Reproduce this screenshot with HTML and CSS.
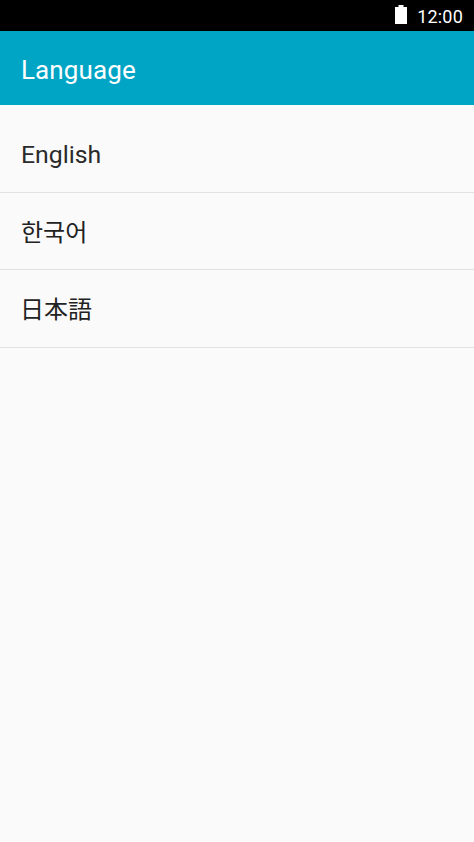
FILE: index.html
```html
<!DOCTYPE html>
<html lang="en">
<head>
<meta charset="utf-8">
<title>Language</title>
<link rel="stylesheet" href="styles.css">
</head>
<body>
<div class="status">
  <svg class="battery" width="14" height="19" viewBox="0 0 14 19"><path d="M4.500 0h5v2H13v17H1V2h3.500z" fill="#fff"/></svg>
  <span class="clock">12:00</span>
</div>
<header class="bar"><h1 class="title">Language</h1></header>
<main class="list">
  <div class="item en">English</div>
  <div class="item cjk-ko" lang="ko">한국어</div>
  <div class="item cjk-ja" lang="ja">日本語</div>
</main>
</body>
</html>
```
FILE: styles.css
```css
html, body { margin: 0; height: 100%; }
body {
  width: 474px; height: 842px; overflow: hidden;
  display: flex; flex-direction: column;
  background: #fafafa;
  font-family: Roboto, "Noto Sans CJK KR", sans-serif;
}
.status {
  height: 31px; background: #000; color: #fff;
  display: flex; align-items: center; justify-content: flex-end;
  gap: 9px; padding-right: 11px;
}
.battery { margin-bottom: 2px; }
.clock { font-size: 18px; line-height: 31px; letter-spacing: .2px; padding-top: 2px; }
.bar {
  height: 74px; background: #00a5c6;
  display: flex; align-items: center; padding-left: 21px;
}
.title { margin: 0; padding-top: 3px; color: #fff; font-size: 26px; font-weight: 400; letter-spacing: .1px; }
.list { flex: 1; padding-top: 10px; }
.item {
  height: 76.500px; border-bottom: 1px solid #e2e2e2;
  display: flex; align-items: center; padding-left: 21px;
  font-size: 25px; color: #1c1c1c;
}
.en { padding-top: 2px; height: 74.500px; font-size: 24.800px; color: #2a2a2a; }
.cjk-ko { font-family: "Noto Sans CJK KR", sans-serif; font-size: 24px; font-weight: 400; color: #222; }
.cjk-ja { font-family: "Noto Sans CJK JP", sans-serif; font-size: 24px; font-weight: 400; color: #222; padding-left: 20px; padding-bottom: 2px; height: 74.500px; }
```
